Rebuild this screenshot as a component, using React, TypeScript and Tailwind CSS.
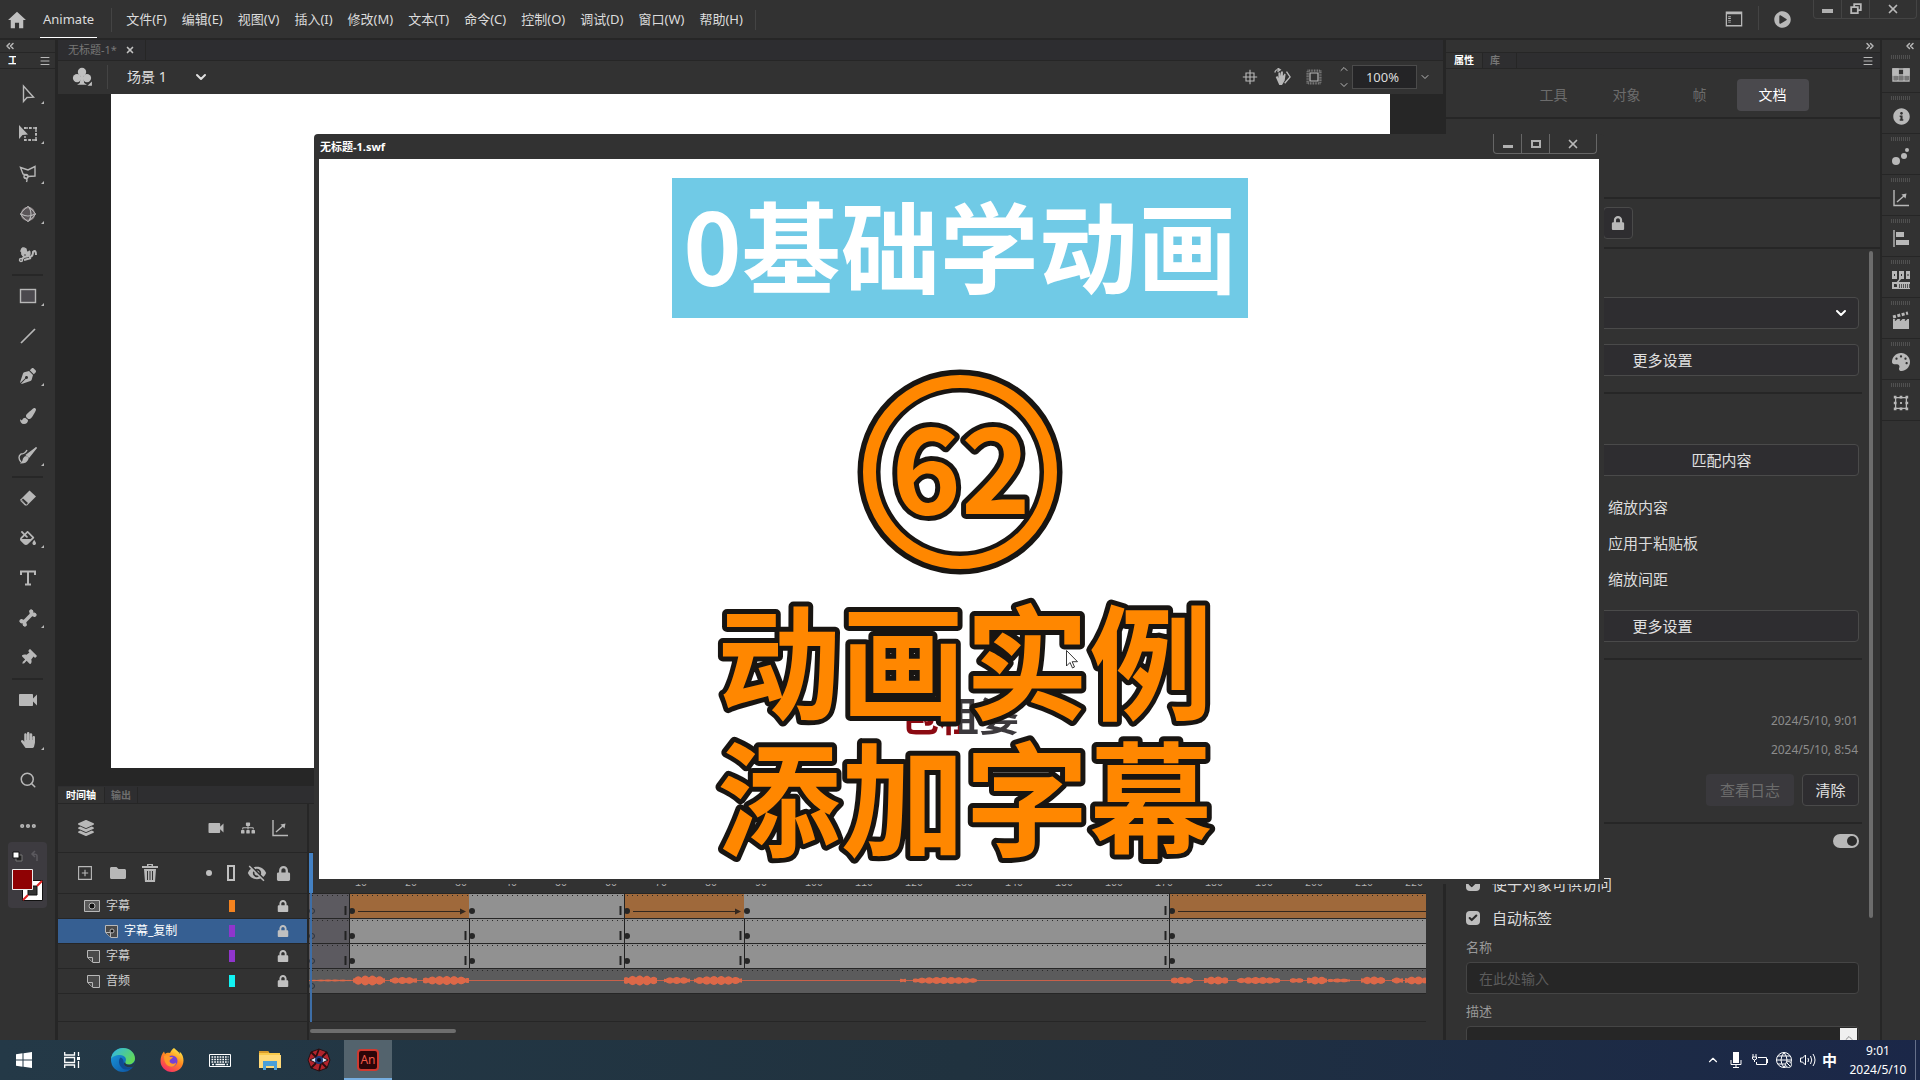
import type { ReactNode } from 'react';
import { FaBone, FaFillDrip, FaFolder, FaHandPaper, FaInfoCircle, FaLayerGroup, FaLock, FaPaintBrush, FaPalette, FaPenNib, FaPlayCircle, FaSitemap, FaThumbtack } from 'react-icons/fa';
import { IoMdHome } from 'react-icons/io';
import { MdVideocam, MdVisibilityOff } from 'react-icons/md';
import { Check, ChevronDown, ChevronUp, ChevronsLeft, ChevronsRight, Menu, MoreHorizontal, Search, X } from 'lucide-react';

const MENUS = ['文件(F)', '编辑(E)', '视图(V)', '插入(I)', '修改(M)', '文本(T)', '命令(C)', '控制(O)', '调试(D)', '窗口(W)', '帮助(H)'];

type Span = { start: number; end: number; kind: 'empty' | 'tween' | 'static' };

const FRAME = 5; // px per frame
const TRACKS: Span[][] = [
  [
    { start: 0, end: 8, kind: 'empty' },
    { start: 8, end: 32, kind: 'tween' },
    { start: 32, end: 63, kind: 'static' },
    { start: 63, end: 87, kind: 'tween' },
    { start: 87, end: 172, kind: 'static' },
    { start: 172, end: 260, kind: 'tween' },
  ],
  [
    { start: 0, end: 8, kind: 'empty' },
    { start: 8, end: 32, kind: 'static' },
    { start: 32, end: 63, kind: 'static' },
    { start: 63, end: 87, kind: 'static' },
    { start: 87, end: 172, kind: 'static' },
    { start: 172, end: 260, kind: 'static' },
  ],
];

// [start px, end px, amplitude]
const WAVE: [number, number, number][] = [
  [2, 42, 1], [44, 76, 5], [81, 108, 3.5], [114, 160, 4.5], [315, 348, 5], [355, 381, 3.5], [385, 433, 4.5],
  [591, 597, 2], [604, 668, 3.5], [862, 884, 3.5], [895, 919, 4], [928, 971, 3.5], [981, 994, 2.5], [998, 1018, 4],
  [1019, 1041, 2], [1052, 1076, 4], [1083, 1094, 3], [1096, 1118, 4],
];

function wavePath() {
  let d = '';
  WAVE.forEach(([from, to, amp]) => {
    for (let x = from; x < to; x++) {
      const envelope = Math.sin(Math.PI * Math.min(1, (x - from + 2) / (to - from + 3)));
      const jitter = 0.6 + 0.4 * Math.abs(Math.sin(x * 12.9898));
      const h = amp * Math.pow(envelope, 0.3) * jitter;
      d += `M${x + 0.5} ${(87.5 - h).toFixed(1)}V${(87.5 + h).toFixed(1)}`;
    }
  });
  return d;
}

function Track({ spans, y }: { spans: Span[]; y: number }) {
  const fills = { empty: '#5c5a60', tween: '#9f693b', static: '#919191' };
  return (
    <g transform={`translate(0 ${y})`}>
      {spans.map((s, i) => {
        const x = s.start * FRAME;
        const end = s.end * FRAME;
        return (
          <g key={i}>
            <rect x={x} y="1" width={end - x} height="24" fill={fills[s.kind]} />
            {i > 0 && spans[i - 1].kind !== 'tween' && <path d={`M${x + 0.5} 0V25`} stroke="#222" />}
            {s.kind === 'empty' ? (
              <circle cx="3" cy="18" r="2.5" fill="none" stroke="#2b3440" />
            ) : (
              <circle cx={x + 3} cy="18" r="3" fill="#262626" />
            )}
            {s.kind === 'tween' ? (
              <g>
                <path d={`M${x + 9} 18.5H${end - 5}`} stroke="#33271e" />
                <path d={`M${end - 9} 15.5L${end - 3} 18.5L${end - 9} 21.5z`} fill="#33271e" />
              </g>
            ) : (
              <path d={`M${end - 3.5} 13V22`} stroke="#222" strokeWidth="2" />
            )}
          </g>
        );
      })}
      <path d="M3 2.5H1400" stroke="#2a2a2a" strokeDasharray="1 4" />
      <path d="M0 .5H1400" stroke="#262626" />
    </g>
  );
}

function Frames() {
  return (
    <svg className="h-[101px] w-full" aria-label="frames">
      <Track spans={TRACKS[0]} y={0} />
      <Track spans={TRACKS[1]} y={25} />
      <Track spans={TRACKS[1]} y={50} />
      <rect y="75" width="100%" height="25" fill="#5b5b5c" />
      <path d="M0 75.5H1400M0 100.5H1400" stroke="#262626" />
      <path d="M3 77.5H1400" stroke="#2a2a2a" strokeDasharray="1 4" />
      <path d="M0 87.5H1400" stroke="#c9614a" />
      <path d={wavePath()} stroke="#dc6848" />
      <circle cx="3" cy="93" r="2.5" fill="none" stroke="#2b3440" />
    </svg>
  );
}

function Svg({ children, className = 'size-5' }: { children: ReactNode; className?: string }) {
  return (
    <svg viewBox="0 0 20 20" className={className} fill="none" stroke="currentColor" strokeWidth="1.4">
      {children}
    </svg>
  );
}

const graphIcon = (
  <Svg>
    <path d="M3 2V17.500H18M6 14L14 7" />
    <path d="M15.500 5.500L10.500 6.500L14.500 10.500z" fill="currentColor" stroke="none" />
  </Svg>
);

const TOOL_GROUPS: { name: string; icon: ReactNode; more?: boolean }[][] = [
  [
    { name: '选择工具', more: true, icon: <Svg><path d="M5.500 2V17.500L9 13.500L15.500 13.200z" /></Svg> },
    {
      name: '任意变形工具',
      more: true,
      icon: (
        <Svg>
          <path d="M7 4H18V16H7V12" strokeDasharray="3 1" />
          <path d="M1 1V15L4.500 11L10 10.500z" fill="currentColor" stroke="none" />
          <path d="M6 3h2v2H6zM17 3h2v2h-2zM17 15h2v2h-2zM6 15h2v2H6zM17 9h2v2h-2zM11 3h2v2h-2zM11 15h2v2h-2z" fill="currentColor" stroke="none" />
        </Svg>
      ),
    },
    {
      name: '套索工具',
      more: true,
      icon: <Svg><path d="M9 11.500L5 10L2.500 3.500L10 6L17 2.500V12L9.500 12.500" /><circle cx="8" cy="12.500" r="2" /><path d="M7 14q3 .5 1.500 4" /></Svg>,
    },
    {
      name: '3D旋转工具',
      more: true,
      icon: <Svg><circle cx="10" cy="10" r="6.500" fill="#5a5558" stroke="#948c8e" /><path d="M3 10Q10 14 17 10M11 3Q15 10 11 17" strokeWidth="1.200" /><path d="M2 10L10 2L18 10L10 18z" strokeWidth=".8" /></Svg>,
    },
    {
      name: '资源变形工具',
      icon: (
        <Svg>
          <path d="M3 7Q4 2 8 5Q8 9 12 9Q12 13 7 13Q3 12 4 7z" fill="currentColor" />
          <path d="M2 17L12 7M11 13Q15 13 15 8Q18 5 18 11M6 16L13 14" strokeWidth="2" />
          <circle cx="3" cy="16" r="1.500" fill="#323232" /><circle cx="7" cy="11" r="1.500" fill="#323232" />
        </Svg>
      ),
    },
  ],
  [
    { name: '矩形工具', more: true, icon: <Svg><rect x="2.500" y="3.500" width="15" height="13" fill="#4b494e" /></Svg> },
    { name: '线条工具', icon: <Svg><path d="M3 17L17 3" strokeWidth="1.700" /></Svg> },
    { name: '钢笔工具', more: true, icon: <FaPenNib className="size-4" /> },
    { name: '传统画笔工具', icon: <FaPaintBrush className="size-4" /> },
    {
      name: '流畅画笔工具',
      more: true,
      icon: <Svg><path d="M18.500 1.500L11 11L8.500 9z" fill="currentColor" /><path d="M8 10Q12 11 10 14Q8 18 2 17.500Q5 15 5 12.500Q6 10 8 10z" fill="currentColor" stroke="none" /><path d="M3 16Q-1 11 3 8Q7 8 9 4" /></Svg>,
    },
  ],
  [
    { name: '橡皮擦工具', icon: <Svg><path d="M11.500 2.500L18 8.500L9 17.500H7L2.500 13V11.500z" fill="currentColor" stroke="none" /><path d="M4 11.500L9 16" stroke="#323232" strokeWidth="3" /><path d="M3 11.500L8 17" strokeWidth="1" /></Svg> },
    { name: '颜料桶工具', more: true, icon: <FaFillDrip className="size-4" /> },
    { name: '文本工具', icon: <Svg><path d="M3 7V3.500H17V7M10 3.500V16.500M7 16.500H13" strokeWidth="2" /></Svg> },
    { name: '骨骼工具', more: true, icon: <FaBone className="size-[18px] -rotate-45" /> },
    { name: '固定工具', icon: <FaThumbtack className="size-4 rotate-45" /> },
  ],
  [
    { name: '摄像头', icon: <MdVideocam className="size-6" /> },
    { name: '手形工具', more: true, icon: <FaHandPaper className="size-4" /> },
    { name: '缩放工具', icon: <Search className="size-[18px]" strokeWidth={2} /> },
  ],
];

function Toolbar() {
  return (
    <aside className="flex w-[55px] shrink-0 flex-col bg-[#323232] text-[#b8b8b8]">
      <div className="flex h-3 items-center px-1">
        <ChevronsLeft className="size-3" strokeWidth={3} />
      </div>
      <div className="flex h-[17px] items-center justify-between border-y border-[#262626] pr-1 pl-2">
        <span className="w-2 overflow-hidden text-[10px] font-bold text-white">工</span>
        <Menu className="size-3" />
      </div>
      <div className="mt-[5px] flex flex-col">
        {TOOL_GROUPS.map((group, i) => (
          <div key={i} className={i < 3 ? 'mx-3 flex flex-col items-center border-b-2 border-[#272727]' : 'mx-3 flex flex-col items-center'}>
            {group.map((tool) => (
              <button key={tool.name} aria-label={tool.name} className="relative flex h-10 w-8 items-center justify-center">
                {tool.icon}
                {tool.more && <span className="absolute right-0 bottom-2.5 border-b-3 border-l-3 border-[#b8b8b8] border-l-transparent" />}
              </button>
            ))}
          </div>
        ))}
      </div>
      <button aria-label="更多" className="mt-3 flex h-7 items-center justify-center">
        <MoreHorizontal className="size-5" strokeWidth={3} />
      </button>
      <div className="mx-2 mt-0.5 flex h-[66px] flex-col rounded bg-[#3d3b40] px-1">
        <svg viewBox="0 0 32 66" className="h-[66px] w-8">
          <path d="M4 13h6v6H4z" fill="#222" stroke="#777" />
          <path d="M1 10h6v6H1z" fill="#fff" stroke="#111" />
          <path d="M25 19V14Q25 12 21 12M23 9L20 12L23 15" fill="none" stroke="#5b595e" strokeWidth="1.500" />
          <path d="M10.500 38.500h20v20h-20z" fill="#fff" stroke="#111" />
          <path d="M16 44h9v9h-9z" fill="#323232" stroke="#111" />
          <path d="M11 58L16 53M25 44L30 39" stroke="#d22" strokeWidth="2" />
          <path d="M.5 27.500h20v20H.5z" fill="#8f0204" stroke="#eee" />
        </svg>
      </div>
    </aside>
  );
}

function MenuBar() {
  return (
    <header className="flex h-[39px] shrink-0 items-start justify-between border-b border-[#262626] bg-[#323232]">
      <nav className="flex h-full items-center pt-0.5 text-[13px] text-[#dcdcdc]">
        <button aria-label="主页" className="ml-1.5 text-[#c0c0c0]">
          <IoMdHome className="size-[22px]" />
        </button>
        <button className="ml-3 h-[35px] border-b border-white px-[3px]">Animate</button>
        <div className="mr-[14px] ml-3.5 h-6 w-px bg-[#444]" />
        <div className="flex gap-[15px]">
          {MENUS.map((m) => (
            <button key={m}>{m}</button>
          ))}
        </div>
        <div className="ml-3 h-5 w-px bg-[#444]" />
      </nav>
      <div className="flex items-start text-[#b8b8b8]">
        <button aria-label="工作区" className="mt-2.5">
          <Svg className="size-[18px]"><path d="M1.500 2.500h17v15h-17zM1.500 4h17" /><path d="M5 7V15" strokeWidth="3" strokeDasharray="1 1" /></Svg>
        </button>
        <div className="mx-[15px] mt-1.5 h-6 w-px bg-[#444]" />
        <button aria-label="播放" className="mt-[11px]">
          <FaPlayCircle className="size-[17px]" />
        </button>
        <div className="mr-[3px] ml-[22px] flex h-[19px] divide-x divide-[#444] rounded-b border border-t-0 border-[#444]">
          <button aria-label="最小化" className="flex w-7 items-center justify-center"><span className="mt-1 h-1 w-[11px] bg-[#b0b0b0]" /></button>
          <button aria-label="还原" className="flex w-7 items-center justify-center">
            <Svg className="size-3"><path d="M7 7V2H18V12H13M2 7H13V17H2z" strokeWidth="3" /></Svg>
          </button>
          <button aria-label="关闭" className="flex w-[46px] items-center justify-center"><X className="size-3.5" strokeWidth={3} /></button>
        </div>
      </div>
    </header>
  );
}

function SceneBar() {
  return (
    <div className="flex h-[34px] shrink-0 items-center justify-between border-t border-[#262626] bg-[#323232] pr-3 pb-0.5 text-[#b8b8b8]">
      <div className="flex items-center">
        <button aria-label="场景元件" className="ml-[13px] text-[#c0c0c0]">
          <svg viewBox="0 0 20 20" className="size-[22px]" fill="currentColor">
            <circle cx="10" cy="5.500" r="3.800" /><circle cx="5.500" cy="11" r="3.800" /><circle cx="14.500" cy="11" r="3.800" />
            <path d="M9 9h2l1 6.500 2.500 1.500h-9L8 15.500zM19 14v4h-4z" />
          </svg>
        </button>
        <div className="ml-3.5 h-6 w-px bg-[#444]" />
        <button className="ml-[19px] flex items-center text-sm text-[#e0e0e0]">
          场景 1
          <ChevronDown className="ml-[26px] size-4" strokeWidth={3} />
        </button>
      </div>
      <div className="flex items-center">
        <button aria-label="舞台居中" className="mr-[15px]"><Svg className="size-4"><path d="M10 1V19M1 10H19M5 5h10v10H5z" /></Svg></button>
        <button aria-label="旋转" className="mr-[15px]">
          <Svg className="size-[18px]"><path d="M15 4L19 10L13 17M2 5Q3 1 7 2M5 0L8 2L5 4" strokeWidth="1.500" /><path d="M3 10L5 9L6 11V5H8V9L9 4H11V9L13 6L14 7L13 14L10 19H7z" fill="currentColor" stroke="none" /></Svg>
        </button>
        <button aria-label="剪切舞台外内容" className="mr-3.5"><Svg className="size-4"><path d="M2 2h16v16H2z" strokeWidth="3" strokeDasharray="1 1" stroke="#888" /><path d="M5 5h10v10H5z" fill="#323232" strokeWidth="1.500" /></Svg></button>
        <span className="flex flex-col gap-1 px-0.5"><ChevronUp className="size-3" /><ChevronDown className="size-3" /></span>
        <input aria-label="缩放" defaultValue="100%" className="h-6 w-[65px] border border-[#4b4b4b] bg-[#242426] pr-1 text-center text-[13px] text-[#dcdcdc]" />
        <ChevronDown className="ml-0.5 size-3" />
      </div>
    </div>
  );
}

function LayerIcon({ kind }: { kind: string }) {
  if (kind === 'mask') {
    return <svg viewBox="0 0 16 12" className="h-3 w-4" fill="#5a5a5a" stroke="#b8b8b8"><path d="M.5 .5h15v11H.5z" /><circle cx="8" cy="6" r="3" fill="#111" /></svg>;
  }
  return (
    <svg viewBox="0 0 13 13" className="size-[13px]" fill="#4a4a4a" stroke="#b8b8b8">
      <path d="M.5 .5h12v12H6L.5 7.500z" /><path d="M1 7.500H5.500V12" />
      {kind === 'masked' && <circle cx="7" cy="6" r="2" fill="#111" />}
    </svg>
  );
}

const LAYERS = [
  { name: '字幕', kind: 'mask', row: 'pl-[26px]', color: 'bg-[#f4831f]' },
  { name: '字幕_复制', kind: 'masked', row: 'bg-[#365f92] pl-[47px] text-white', color: 'bg-[#9035cc]' },
  { name: '字幕', kind: 'normal', row: 'pl-[29px]', color: 'bg-[#9035cc]' },
  { name: '音频', kind: 'normal', row: 'pl-[29px]', color: 'bg-[#12f3f3]' },
];

function Timeline() {
  return (
    <section className="flex h-[254px] shrink-0 flex-col bg-[#323232] text-[#b8b8b8]">
      <div className="flex h-[18px] shrink-0 items-end border-b border-[#262626] bg-[#2e2e30] text-[10px] leading-4 font-bold">
        <button className="bg-[#323232] px-2 text-white">时间轴</button>
        <button className="border-x border-[#262626] px-1.5 text-[#6e6e6e]">输出</button>
      </div>
      <div className="flex min-h-0 flex-1">
        <div className="flex w-[251px] shrink-0 flex-col border-r-2 border-[#262626]">
          <div className="flex h-[49px] shrink-0 items-center border-b border-[#262626] pl-5">
            <button aria-label="图层深度"><FaLayerGroup className="size-4" /></button>
            <div className="mr-[17px] ml-auto flex items-center gap-3">
              <button aria-label="添加摄像头"><MdVideocam className="size-5" /></button>
              <button aria-label="父子关系" className="flex w-5 justify-center"><FaSitemap className="size-3.5" /></button>
              <button aria-label="图表">{graphIcon}</button>
            </div>
          </div>
          <div className="flex h-[41px] shrink-0 items-center border-b border-[#262626] pl-[19px]">
            <button aria-label="新建图层"><Svg className="size-4"><path d="M2 2h16v16H2zM10 6v8M6 10h8" /></Svg></button>
            <button aria-label="新建文件夹" className="ml-[17px]"><FaFolder className="size-4" /></button>
            <button aria-label="删除" className="ml-4">
              <svg viewBox="0 0 16 18" className="h-[18px] w-4" fill="currentColor"><path d="M0 2h5V0h6v2h5v2H0zM2 5h12l-1 13H3zM6.500 2h3V1h-3z" /><path d="M5.500 7v9M8 7v9M10.500 7v9" stroke="#323232" /></svg>
            </button>
            <div className="mr-4 ml-auto flex items-center">
              <span className="mr-[15px] size-1.5 rounded-full bg-[#c0c0c0]" />
              <span className="mr-3 h-4 w-2 border-2 border-[#c0c0c0]" />
              <MdVisibilityOff className="mr-[9px] size-5" />
              <FaLock className="size-[15px]" />
            </div>
          </div>
          {LAYERS.map((l, i) => (
            <div key={i} className={`flex h-[25px] shrink-0 items-center border-b border-[#262626] pr-[18px] text-xs text-[#d0d0d0] ${l.row}`}>
              <LayerIcon kind={l.kind} />
              <span className="ml-1.5">{l.name}</span>
              <span className={`mr-[42px] ml-auto h-3 w-1.5 ${l.color}`} />
              <FaLock className="size-3 text-[#c0c0c0]" />
            </div>
          ))}
          <div className="h-7 border-b border-[#262626]" />
        </div>
        <div className="relative flex min-w-0 flex-1 flex-col">
          <div className="h-[49px] shrink-0 border-b border-[#262626]" />
          <div className="mr-[17px] flex h-[40px] shrink-0 items-end overflow-hidden pb-0.5 pl-[46px] font-['Liberation_Mono',monospace] text-[10px] text-[#b0b0b0]">
            {Array.from({ length: 22 }, (_, i) => (
              <span key={i} className="w-[50px] shrink-0">{(i + 1) * 10}</span>
            ))}
          </div>
          <div className="mr-[17px]"><Frames /></div>
          <div className="mr-[17px] h-[28px] border-b border-[#262626]" />
          <div className="mt-[7px] ml-px h-1 w-[146px] rounded-full bg-[#6d6d6d]" />
          <div className="absolute top-[49px] left-0 flex flex-col">
            <span className="h-10 w-1 bg-[#4481c3]" />
            <span className="ml-px h-[129px] w-0.5 bg-[#3e6ea6]" />
          </div>
        </div>
      </div>
    </section>
  );
}

function PanelCheck({ label, className = '' }: { label: string; className?: string }) {
  return (
    <label className={`flex items-center text-[15px] text-[#dcdcdc] ${className}`}>
      <span className="relative flex size-3.5 shrink-0">
        <input type="checkbox" defaultChecked className="size-3.5 appearance-none rounded-sm bg-[#bdbdbd]" />
        <Check className="absolute inset-0.5 size-2.5 text-[#2b2b2b]" strokeWidth={5} />
      </span>
      <span className="ml-3">{label}</span>
    </label>
  );
}

const PANEL_BUTTON = 'h-8 rounded border border-[#4a4a4a] bg-[#2e2d30] text-[15px] text-[#e0e0e0]';

function Properties() {
  return (
    <aside className="ml-[3px] flex w-[434px] shrink-0 flex-col overflow-hidden bg-[#323232] text-[#b8b8b8]">
      <div className="flex h-3 shrink-0 items-center justify-end pr-1">
        <ChevronsRight className="size-3" strokeWidth={3} />
      </div>
      <div className="flex h-[17px] shrink-0 items-center border-y border-[#262626] bg-[#2e2e30] text-[10px] font-bold">
        <button className="bg-[#323232] px-2 text-white">属性</button>
        <button className="border-x border-[#262626] pr-4 pl-[7px] text-[#777]">库</button>
        <Menu className="mr-1.5 ml-auto size-3" />
      </div>
      <div className="flex h-[50px] shrink-0 items-center justify-center gap-px border-b-2 border-[#262626] pt-1 text-sm text-[#6c6c6c]">
        <button className="w-[72px]">工具</button>
        <button className="w-[72px]">对象</button>
        <button className="w-[72px]">帧</button>
        <button className="h-8 w-[72px] rounded bg-[#4a494d] text-white">文档</button>
      </div>
      <div className="h-20 shrink-0 border-b-2 border-[#262626]" />
      <div className="flex h-[50px] shrink-0 items-center border-b-2 border-[#262626] pl-[157px]">
        <button aria-label="锁定" className="flex h-8 w-[30px] items-center justify-center rounded border border-[#4a4a4a] bg-[#2e2d30]"><FaLock className="size-3.5" /></button>
      </div>
      <div className="flex min-h-0 flex-1 overflow-hidden">
        <div className="ml-5 flex-1 divide-y-2 divide-[#262626]">
          <div className="flex flex-col gap-[15px] pt-12 pr-[3px] pb-4">
            <div className="relative flex flex-col">
              <select aria-label="文档预设" className={`${PANEL_BUTTON} w-full appearance-none`}><option></option></select>
              <ChevronDown className="pointer-events-none absolute top-2 right-2.5 size-4 text-white" strokeWidth={3} />
            </div>
            <button className={PANEL_BUTTON}>更多设置</button>
          </div>
          <div className="flex flex-col pt-[50px] pr-[3px] pb-4">
            <button className={`${PANEL_BUTTON} ml-[118px]`}>匹配内容</button>
            <div className="mt-[13px] mb-[13px] ml-[116px]">
              <PanelCheck className="h-9" label="缩放内容" />
              <PanelCheck className="h-9" label="应用于粘贴板" />
              <PanelCheck className="h-9" label="缩放间距" />
            </div>
            <button className={PANEL_BUTTON}>更多设置</button>
          </div>
          <div className="flex flex-col items-end pt-[46px] pr-[3px] pb-4">
            <p className="h-[29px] pr-px text-xs leading-[29px] text-[#8c8c8c]">2024/5/10, 9:01</p>
            <p className="h-[29px] pr-px text-xs leading-[29px] text-[#8c8c8c]">2024/5/10, 8:54</p>
            <div className="mt-2.5 flex gap-2">
              <button disabled className="h-8 w-[88px] rounded bg-[#3a393d] text-[15px] text-[#6c6c6c]">查看日志</button>
              <button className={`${PANEL_BUTTON} w-[57px]`}>清除</button>
            </div>
          </div>
          <div className="flex flex-col pt-2.5 pr-[3px]">
            <span className="relative flex w-[26px] self-end">
              <input type="checkbox" role="switch" aria-label="辅助功能" defaultChecked className="h-3.5 w-[26px] appearance-none rounded-full bg-[#b8b8b8]" />
              <span className="pointer-events-none absolute top-0.5 right-0.5 size-2.5 rounded-full bg-[#2b2b2b]" />
            </span>
            <PanelCheck className="mt-[19px] h-[34px]" label="使子对象可供访问" />
            <PanelCheck className="h-[34px]" label="自动标签" />
            <label htmlFor="acc-name" className="h-[27px] text-[13px] leading-6 text-[#999]">名称</label>
            <input id="acc-name" placeholder="在此处输入" className="h-8 shrink-0 rounded border border-[#454545] bg-[#262626] px-3 text-sm placeholder:text-[#5c5c5c]" />
            <label htmlFor="acc-desc" className="mt-[5px] h-[27px] shrink-0 text-[13px] leading-6 text-[#999]">描述</label>
            <div className="relative flex">
              <textarea id="acc-desc" className="h-20 w-full resize-none rounded border border-[#454545] bg-[#262626]" />
              <span className="absolute top-0.5 right-0.5 flex h-4 w-[17px] justify-center bg-[#f0f0f0] text-[#888]"><ChevronUp className="mt-1 size-3" /></span>
            </div>
          </div>
        </div>
        <div className="w-[18px] pt-0.5 pl-[7px]">
          <div className="h-[667px] w-1 rounded-full bg-[#6c6c6c]" />
        </div>
      </div>
    </aside>
  );
}

const DOCK: { name: string; icon: ReactNode }[] = [
  { name: '样本', icon: <Svg><path d="M2 4h16v12H2zM2 10h16M7 4v12M13 4v12" /><path d="M2 4h5v6H2zM13 4h5v6h-5z" fill="currentColor" /><path d="M3 11h4v4H3zM8 11h4v4H8zM14 11h4v4h-4z" fill="#777" stroke="none" /></Svg> },
  { name: '信息', icon: <FaInfoCircle className="size-[17px]" /> },
  { name: '图形', icon: <Svg className="size-5"><g fill="currentColor" stroke="none"><circle cx="5" cy="14" r="4" /><circle cx="13" cy="9" r="3" /><circle cx="16" cy="3" r="2" /></g></Svg> },
  { name: '图表', icon: graphIcon },
  { name: '对齐', icon: <Svg><path d="M3 1V18" /><path d="M5 3h8v5H5zM5 11h13v5H5z" fill="currentColor" stroke="none" /></Svg> },
  { name: '组件', icon: <Svg><path d="M1 1h5v8H1zM8 1h5v8H8zM15 1h4v8h-4zM1 12h18v7H1z" fill="currentColor" stroke="none" /><path d="M3 14h3v3H3z" fill="#323232" stroke="none" /><path d="M8 15h11M8 17h11" stroke="#323232" strokeDasharray="1 1" /><path d="M3 5h1M10 5h1M16.500 5h1" stroke="#323232" strokeWidth="2" /><path d="M5 14L10 8" /></Svg> },
  { name: '场景', icon: <Svg><path d="M2 8h16v10H2z" fill="currentColor" stroke="none" /><path d="M2 6L17 2" strokeWidth="3" strokeDasharray="3 1.500" /><path d="M4 9.500l2-2M9 9.500l2-2M14 9.500l2-2" stroke="#323232" /></Svg> },
  { name: '颜色', icon: <FaPalette className="size-[18px] -scale-x-100" /> },
  { name: '变形', icon: <Svg className="size-[18px]"><path d="M4 4h12v12H4z" /><path d="M2 2h3v3H2zM15 2h3v3h-3zM2 15h3v3H2zM15 15h3v3h-3zM8.500 2h3v3h-3zM8.500 15h3v3h-3zM2 8.500h3v3H2zM15 8.500h3v3h-3zM9 9h2v2H9z" fill="currentColor" stroke="none" /></Svg> },
];

function Dock() {
  return (
    <aside className="ml-0.5 w-[38px] shrink-0 bg-[#323232] text-[#b8b8b8]">
      <div className="flex h-3 items-center justify-end pr-1"><ChevronsLeft className="size-3" strokeWidth={3} /></div>
      {DOCK.map((d, i) => (
        <div key={i} className="flex h-[41px] flex-col items-center border-b border-[#262626]">
          <svg className="mt-[3px] h-1 w-5"><path d="M0 2H20" stroke="#505050" strokeWidth="4" strokeDasharray="1 1" /></svg>
          <button aria-label={d.name} className="flex h-8 items-center justify-center">{d.icon}</button>
        </div>
      ))}
    </aside>
  );
}

function TitleLine({ children }: { children: string }) {
  return (
    <svg viewBox="0 0 530 137" className="h-[137px] w-[530px] overflow-visible">
      <text x="270" y="115" textAnchor="middle" fontSize="124" fontWeight="700" fill="#ff8700" stroke="#181512" strokeWidth="10" strokeLinejoin="round" paintOrder="stroke">
        {children}
      </text>
    </svg>
  );
}

function PlayerWindow() {
  return (
    <section className="absolute top-[134px] right-[316px] bottom-[196px] left-[314px] flex flex-col rounded-t bg-[#323232]">
      <div className="flex h-[25px] shrink-0 justify-between pr-[7px] pl-1.5">
        <h2 className="text-[11px] leading-[26px] font-bold text-white">无标题-1.swf</h2>
        <div className="flex h-5 divide-x divide-[#666] rounded-b border border-t-0 border-[#666] text-[#b8b8b8]">
          <button aria-label="最小化" className="flex w-7 items-center justify-center"><span className="mt-1.5 h-[3px] w-2.5 bg-[#b0b0b0]" /></button>
          <button aria-label="最大化" className="flex w-7 items-center justify-center"><span className="h-2 w-2.5 border-2 border-[#b0b0b0]" /></button>
          <button aria-label="关闭" className="flex w-[46px] items-center justify-center"><X className="size-3.5" strokeWidth={3} /></button>
        </div>
      </div>
      <div className="relative mx-[5px] mb-[5px] flex min-h-0 flex-1 flex-col items-center overflow-hidden bg-white pt-[19px] pl-0.5 font-['Noto_Sans_CJK_SC',sans-serif]">
        <p className="absolute top-[532px] left-[580px] bg-linear-to-r from-[#8b0a12] from-50% to-[#3c393d] to-50% bg-clip-text text-[40px] leading-[46px] font-bold text-transparent">包租婆</p>
        <h1 className="relative flex h-[140px] w-[576px] shrink-0 items-center justify-center bg-[#70cae6] pb-2.5 text-[99px] leading-none font-bold text-white">0基础学动画</h1>
        <svg viewBox="0 0 204 204" className="relative mt-[52px] size-[204px] shrink-0 overflow-visible">
          <circle cx="102" cy="102" r="91" fill="none" stroke="#181512" strokeWidth="23" />
          <text x="103" y="144" textAnchor="middle" fontSize="118" fontWeight="700" fill="#ff8700" stroke="#181512" strokeWidth="10" strokeLinejoin="round" paintOrder="stroke">62</text>
          <circle cx="102" cy="102" r="90.5" fill="none" stroke="#ff8700" strokeWidth="13" />
        </svg>
        <div className="relative mt-[21px] flex flex-col">
          <TitleLine>动画实例</TitleLine>
          <TitleLine>添加字幕</TitleLine>
        </div>
        <svg viewBox="0 0 12 19" className="absolute top-[491px] left-[747px] h-[19px] w-3" fill="#fff" stroke="#222" strokeWidth=".9">
          <path d="M.5 .5V16L4 12.500L6.500 18L8.500 17L6.200 11.700H11.500z" />
        </svg>
      </div>
    </section>
  );
}

function Taskbar() {
  return (
    <footer className="flex h-10 shrink-0 items-stretch justify-between bg-linear-to-r from-[#243947] via-[#20323f] to-[#1b2748] text-white">
      <div className="flex">
        <button aria-label="开始" className="flex w-12 items-center justify-center">
          <svg viewBox="0 0 16 16" className="size-4" fill="currentColor"><path d="M0 2.300L6.500 1.300V7.500H0zM7.500 1.200L16 0V7.500H7.500zM0 8.500H6.500V14.700L0 13.700zM7.500 8.500H16V16L7.500 14.800z" /></svg>
        </button>
        <button aria-label="任务视图" className="flex w-12 items-center justify-center">
          <svg viewBox="0 0 16 16" className="size-4" fill="none" stroke="currentColor" strokeWidth="1.300"><path d="M.7 0V3H10.500V0M.7 16V13H10.500V16M.7 5.500h9.800v5H.7zM14.500 0V4M14.500 9V16" /><path d="M13 5h3v3h-3z" fill="currentColor" stroke="none" /></svg>
        </button>
        <button aria-label="Edge" className="flex w-[54px] items-center justify-center">
          <svg viewBox="0 0 24 24" className="size-6">
            <defs>
              <linearGradient id="edge-top" x1="0" y1="0" x2="1" y2=".6"><stop offset="0" stopColor="#2fb4ee" /><stop offset="1" stopColor="#62d956" /></linearGradient>
              <linearGradient id="edge-low" x1="0" y1="0" x2="1" y2="1"><stop offset="0" stopColor="#1b9de2" /><stop offset="1" stopColor="#0c4d9c" /></linearGradient>
            </defs>
            <circle cx="12" cy="12" r="12" fill="url(#edge-low)" />
            <path d="M0 11C1 4 6 0 12 0C19 0 24 5 24 10.500C24 14 21 16.500 18 16.500C15 16.500 13.500 15 14.500 13.500C16 11 14 7 9 7C4.500 7 1 9 0 11z" fill="url(#edge-top)" />
            <path d="M9.500 9.500C7 12 7.500 17 11 20C14 22.500 19 22 21.500 19C18 20.500 13.500 19.500 13 16C12.500 13.500 13 11 9.500 9.500z" fill="#0f4a93" />
            <path d="M14.500 13.500C13.500 15 15 16.700 18 16.700C21 16.700 23 15 24 12.500C24 15.500 23 18 21.500 19C18 20 13 19 13 15.500z" fill="#243947" />
          </svg>
        </button>
        <button aria-label="Firefox" className="flex w-11 items-center justify-center">
          <svg viewBox="0 0 24 24" className="size-6">
            <defs><linearGradient id="fox" x1=".8" y1="0" x2=".2" y2="1"><stop offset="0" stopColor="#fff04a" /><stop offset=".45" stopColor="#ff8a1f" /><stop offset="1" stopColor="#f6256c" /></linearGradient></defs>
            <path d="M14 0C16 2 19 4 20 6C20 5 19.500 4 19.500 3.500C22.500 6 23.500 9.500 23.500 12.500C23.500 19 18.500 24 12 24S.5 19 .5 13C.5 9 2 5.500 4 3.500L5 6C6 5 8 4.500 10 5C11 3 12 1 14 0z" fill="url(#fox)" />
            <circle cx="12" cy="13" r="5.500" fill="#7441d6" />
            <path d="M4 8C7 6 9 7 10 9H13C12 11 10 11 9.500 13C10 16 14 16.500 16 14.500C16 18 12 20 8.500 18C5 16 4 12 4 8z" fill="#ff9a2a" />
          </svg>
        </button>
        <button aria-label="键盘" className="flex w-[52px] items-center justify-center">
          <svg viewBox="0 0 22 13" className="h-[13px] w-[22px]" fill="none" stroke="currentColor"><path d="M.5 .5h21v12H.5z" /><path d="M2.500 3h17M2.500 5.500h17M2.500 8h17" strokeWidth="1.700" strokeDasharray="1.700 1" /><path d="M3 10.500H5M6.500 10.500H16M17.500 10.500H19" strokeWidth="1.500" /></svg>
        </button>
        <button aria-label="文件资源管理器" className="flex w-12 items-center justify-center">
          <svg viewBox="0 0 22 20" className="h-5 w-[22px]"><path d="M0 1h9l1.500 2H21v15H0z" fill="#f9c94a" /><path d="M0 1h9l1 2H0z" fill="#d99b2b" /><path d="M0 5h22v13H0z" fill="#ffd978" /><path d="M4 11h14v9h-3v-4H7v4H4z" fill="#4b9fd8" /></svg>
        </button>
        <button aria-label="看图" className="flex w-[50px] items-center justify-center">
          <svg viewBox="0 0 24 24" className="size-6"><path d="M12 1L20 4L23 12L20 20L12 23L4 20L1 12L4 4z" fill="#b3242c" stroke="#241114" /><path d="M12 1L9 9M20 4L15 9M4 20L9 15M12 23L14 15M4 4L9 9M20 20L15 15" stroke="#2a0d10" strokeWidth="1.800" /><path d="M3 12Q12 6 21 12Q12 18 3 12z" fill="#dce4f2" stroke="#241114" /><circle cx="12" cy="12" r="4" fill="#1c3a7a" /><circle cx="12" cy="12" r="2" fill="#060a18" /></svg>
        </button>
        <button aria-label="Adobe Animate" className="flex w-12 items-center justify-center border-b-2 border-[#76aee0] bg-[#53636d]">
          <span className="mt-0.5 flex size-[22px] items-center justify-center rounded-sm border-2 border-[#cf3a30] bg-[#2c0508] text-xs leading-none text-[#f05a48]">An</span>
        </button>
      </div>
      <div className="flex items-center">
        <ChevronUp className="mr-2.5 size-3.5" />
        <svg viewBox="0 0 12 16" className="mr-2.5 h-4 w-3" fill="none" stroke="currentColor"><rect x="3" y="0" width="6" height="11" fill="currentColor" stroke="none" /><path d="M1 8V12.500H11V8M6 12V15.500M3 15.500H9" /></svg>
        <svg viewBox="0 0 16 12" className="mr-2 h-3 w-4" fill="none" stroke="currentColor"><path d="M6 3.500H14.500V10.500H4.500V8M15.500 5V9M1 0V3M4 0V3M.5 3H4.500V5Q2.500 7 .5 5zM2.500 6V8" /></svg>
        <svg viewBox="0 0 16 16" className="mr-2 size-4" fill="none" stroke="currentColor"><circle cx="8" cy="8" r="7.500" /><path d="M.5 8H15M8 .5Q2 8 8 15.500M8 .5Q14 8 8 15.500M2 4H14M2 12H9" /><circle cx="12.500" cy="12.500" r="3" fill="#1f2d48" /><path d="M10.500 10.500L14.500 14.500" /></svg>
        <svg viewBox="0 0 16 14" className="mr-1.5 h-3.5 w-4" fill="none" stroke="currentColor"><path d="M.5 5V9H2.500L5.500 12V2L2.500 5zM8 5Q9 7 8 9M10.500 3Q13 7 10.500 11M13 1Q17 7 13 13" /></svg>
        <span className="mr-2.5 text-[15px] font-bold">中</span>
        <div className="mr-1.5 flex w-[62px] flex-col items-center text-xs leading-[19px]">
          <span>9:01</span>
          <span>2024/5/10</span>
        </div>
        <span className="mr-1 h-full w-px bg-[#66708a]" />
      </div>
    </footer>
  );
}

export default function App() {
  return (
    <div className="relative flex h-screen flex-col overflow-hidden bg-[#262626] font-['Noto_Sans','Noto_Sans_CJK_SC',sans-serif]">
      <MenuBar />
      <main className="flex min-h-0 flex-1 pt-px">
        <Toolbar />
        <div className="ml-[3px] flex min-w-0 flex-1 flex-col">
          <div className="flex h-5 shrink-0 bg-[#2d2d30]">
            <button className="flex items-center gap-2 border-r border-[#262626] pr-2.5 pl-2.5 text-[11px] text-[#777]">
              无标题-1*
              <X className="size-2.5 text-[#c0c0c0]" strokeWidth={4} />
            </button>
          </div>
          <SceneBar />
          <div className="flex min-h-0 flex-1 pr-[53px] pb-[18px] pl-[53px]">
            <div className="flex-1 bg-white" />
          </div>
          <Timeline />
        </div>
        <Properties />
        <Dock />
      </main>
      <Taskbar />
      <PlayerWindow />
    </div>
  );
}
